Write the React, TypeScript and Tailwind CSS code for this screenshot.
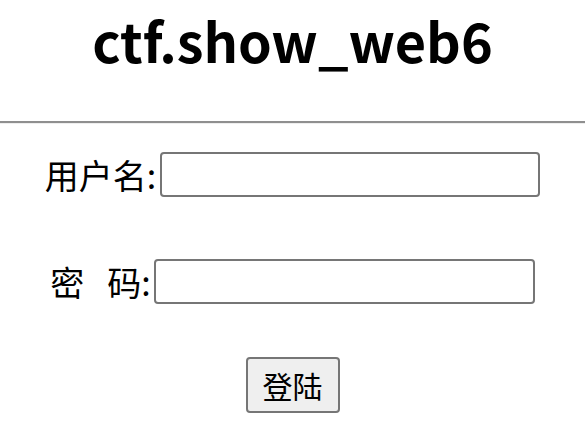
export default function App() {
  return (
    <div className="bg-white text-black font-['Noto_Sans_CJK_SC',sans-serif] min-h-[430px]">
      <h1 className="text-center text-[54px] font-bold leading-[80px]">ctf.show_web6</h1>
      <div className="mt-[41px] border-t-2 border-t-[#8f8f8f] border-b border-b-[#eeeeee]" />
      <form className="flex flex-col items-center" onSubmit={(e) => e.preventDefault()}>
        <div className="mt-[28px] flex items-center text-[34px] leading-[45px]">
          <span>用户名:</span>
          <input type="text" className="ml-[4px] w-[380px] h-[45px] border-2 border-[#767676] rounded-[4px]" />
        </div>
        <div className="mt-[62px] flex items-center text-[34px] leading-[45px]">
          <span>密&nbsp;&nbsp;&nbsp;码:</span>
          <input type="password" className="ml-[3px] w-[381px] h-[45px] border-2 border-[#767676] rounded-[4px]" />
        </div>
        <button
          type="submit"
          className="mt-[53px] w-[94px] h-[56px] bg-[#efefef] border-2 border-[#767676] rounded-[4px] text-[30px] leading-none"
        >
          登陆
        </button>
      </form>
    </div>
  )
}
